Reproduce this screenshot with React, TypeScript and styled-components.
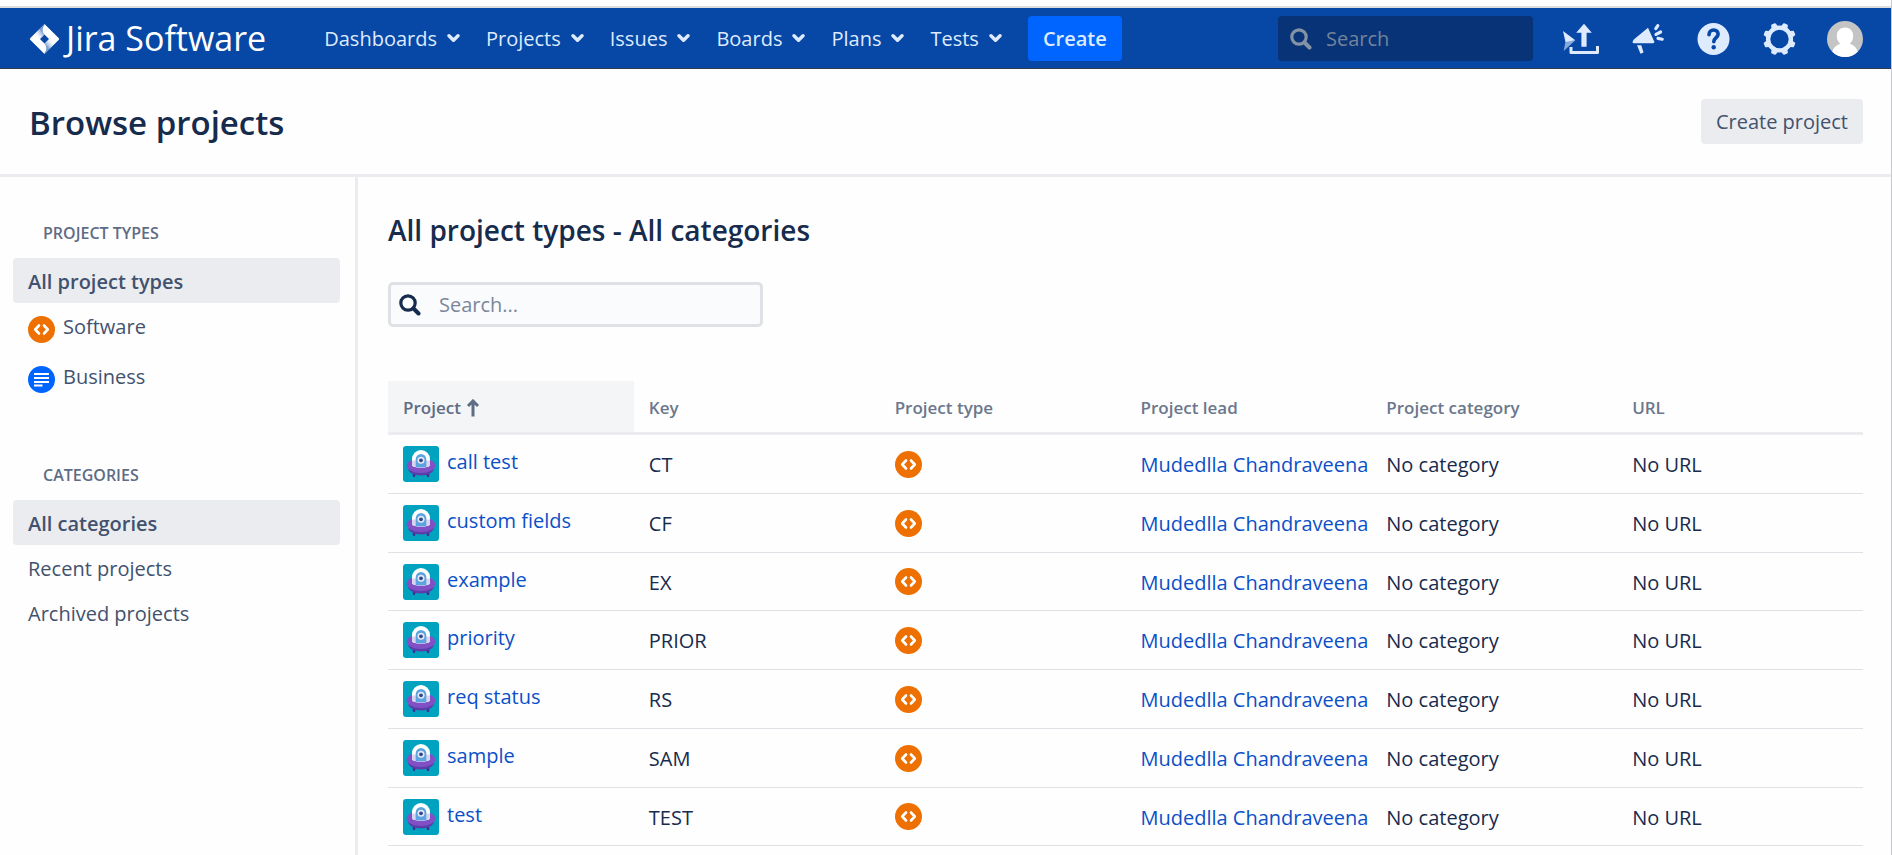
import React from 'react';
import styled, { createGlobalStyle } from 'styled-components';

const color = {
  nav: '#0747a6',
  navText: '#deebff',
  primary: '#0065ff',
  link: '#0b50c8',
  heading: '#172b4d',
  text: '#253858',
  muted: '#42526e',
  subtle: '#6b778c',
  line: '#ebecf0',
  rowLine: '#dfe1e6',
};

const GlobalStyle = createGlobalStyle`
  *, *::before, *::after { box-sizing: border-box; }
  body {
    margin: 0;
    background: #fefefe;
    color: ${color.heading};
    font: 400 20px/30px 'Open Sans', 'Noto Sans', sans-serif;
  }
  button, input { font: inherit; }
  a { text-decoration: none; }
`;

const Page = styled.div`
  display: flex;
  flex-direction: column;
  min-height: 100vh;
  padding-top: 6px;
  border-right: 1px solid #c8c8ca;
`;

const TopBar = styled.header`
  display: flex;
  align-items: center;
  padding: 8px 28px 7px 29px;
  border-top: 2px solid #dddddd;
  border-bottom: 1px solid #2e3d54;
  background: ${color.nav};
  background-clip: padding-box;
`;

const Brand = styled.a`
  display: flex;
  align-items: center;
  gap: 6px;
  margin-right: 58px;
  color: #fff;
  font-size: 34px;
  line-height: 45px;
  white-space: nowrap;
`;

const Menu = styled.nav`
  display: flex;
  align-items: center;
  gap: 26px;
`;

const MenuButton = styled.button`
  display: flex;
  align-items: center;
  gap: 10px;
  padding: 0;
  border: 0;
  background: none;
  color: ${color.navText};
`;

const CreateButton = styled.button`
  height: 45px;
  padding: 0 15px;
  border: 0;
  border-radius: 4px;
  background: ${color.primary};
  color: ${color.navText};
  font-weight: 600;
`;

const QuickSearch = styled.label`
  display: flex;
  align-items: center;
  gap: 14px;
  width: 255px;
  height: 45px;
  margin-left: auto;
  padding: 0 12px;
  border-radius: 4px;
  background: #083376;
  color: #8492a6;
`;

const QuickInput = styled.input`
  flex: 1;
  min-width: 0;
  padding: 0;
  border: 0;
  outline: 0;
  background: none;
  color: #fff;
  &::placeholder { color: #73839c; opacity: 1; }
`;

const Tools = styled.div`
  display: flex;
  gap: 30px;
  margin-left: 30px;
`;

const ToolButton = styled.button`
  display: block;
  width: 36px;
  height: 36px;
  padding: 0;
  border: 0;
  background: none;
  color: ${color.navText};
  svg { display: block; }
`;

const PageHeader = styled.div`
  display: flex;
  align-items: center;
  justify-content: space-between;
  padding: 30px 28px 30px 29px;
  border-bottom: 3px solid ${color.line};
`;

const Title = styled.h1`
  margin: 0;
  padding-top: 3px;
  font-size: 33px;
  font-weight: 600;
  line-height: 42px;
`;

const PlainButton = styled.button`
  height: 45px;
  padding: 0 15px;
  border: 0;
  border-radius: 4px;
  background: ${color.line};
  color: ${color.muted};
`;

const Body = styled.div`
  display: flex;
  flex: 1;
`;

const Sidebar = styled.aside`
  flex: none;
  width: 358px;
  padding: 0 15px 0 13px;
  border-right: 3px solid ${color.line};
`;

const Group = styled.section`
  padding-top: 44px;
  margin-bottom: 16px;
`;

const GroupTitle = styled.h2`
  margin: 0 30px 13px;
  color: #5e6c84;
  font-size: 16px;
  font-weight: 600;
  line-height: 24px;
`;

const SideLink = styled.a<{ $active?: boolean }>`
  display: block;
  height: 45px;
  padding: 1px 15px 0;
  border-radius: 4px;
  background: ${(p) => (p.$active ? color.line : 'transparent')};
  color: ${color.muted};
  font-weight: ${(p) => (p.$active ? 600 : 400)};
  line-height: 45px;
`;

const TypeLink = styled.a`
  display: flex;
  gap: 8px;
  height: 50px;
  padding: 13px 15px 0;
  color: ${color.muted};
  line-height: 22px;
`;

const Main = styled.main`
  flex: 1;
  min-width: 0;
  padding: 35px 28px 0 30px;
`;

const Subtitle = styled.h2`
  margin: 0 0 34px;
  font-size: 28px;
  font-weight: 600;
  line-height: 36px;
`;

const Filter = styled.label`
  display: flex;
  align-items: center;
  gap: 18px;
  width: 375px;
  height: 45px;
  margin-bottom: 54px;
  padding: 0 8px;
  border: 3px solid ${color.rowLine};
  border-radius: 5px;
  background: #fafbfc;
  color: ${color.heading};
`;

const FilterInput = styled.input`
  flex: 1;
  min-width: 0;
  padding: 0;
  border: 0;
  outline: 0;
  background: none;
  &::placeholder { color: #7a869a; opacity: 1; }
`;

const Table = styled.table`
  width: 100%;
  table-layout: fixed;
  border-collapse: separate;
  border-spacing: 0;
`;

const HeadCell = styled.th<{ $sorted?: boolean }>`
  height: 54px;
  padding: 2px 0 0 15px;
  border-bottom: 3px solid ${color.line};
  background: ${(p) => (p.$sorted ? '#f4f5f7' : 'transparent')};
  color: ${(p) => (p.$sorted ? '#5e6c84' : color.subtle)};
  font-size: 17px;
  font-weight: 600;
  line-height: 24px;
  text-align: left;
`;

const SortLabel = styled.span`
  display: flex;
  align-items: center;
  gap: 5px;
`;

const Row = styled.tr`
  height: 59px;
  &:nth-child(4n + 3) { height: 58px; }
`;

const Cell = styled.td`
  padding: 0 0 0 15px;
  border-bottom: 1px solid ${color.rowLine};
  white-space: nowrap;
  svg { display: block; }
`;

const TextCell = styled(Cell)`
  padding-top: 2px;
`;

const TextLink = styled.a`
  color: ${color.link};
`;

const ProjectLink = styled.a`
  display: flex;
  gap: 8px;
  color: ${color.link};
  line-height: 32px;
`;

const JiraMark = () => (
  <svg width="31" height="32" viewBox="0 0 31 32" aria-hidden="true">
    <defs>
      <linearGradient id="facetTop" x1="15" y1="10" x2="8" y2="16" gradientUnits="userSpaceOnUse">
        <stop offset="0" stopColor="#0747a6" stopOpacity=".55" />
        <stop offset="1" stopColor="#fff" stopOpacity="0" />
      </linearGradient>
      <linearGradient id="facetBottom" x1="16" y1="22" x2="23" y2="16" gradientUnits="userSpaceOnUse">
        <stop offset="0" stopColor="#0747a6" stopOpacity=".55" />
        <stop offset="1" stopColor="#fff" stopOpacity="0" />
      </linearGradient>
    </defs>
    <path
      fill="#fff"
      fillRule="evenodd"
      d="M15.500 1 29.600 14.900a1.500 1.500 0 0 1 0 2.200L15.500 31 1.400 17.100a1.500 1.500 0 0 1 0-2.200zM15.500 11.600 11 16l4.500 4.400L20 16z"
    />
    <path fill="url(#facetTop)" d="M15.500 1v1c-2.500 3-2.300 7 0 9.600L8.500 18.500 5 11.500z" />
    <path fill="url(#facetBottom)" d="M15.500 31v-1c2.500-3 2.300-7 0-9.600l7-6.900 3.500 7z" />
  </svg>
);

const Chevron = () => (
  <svg width="13" height="9" viewBox="0 0 13 9" aria-hidden="true">
    <path d="M2 1.800 6.500 6.300 11 1.800" fill="none" stroke="currentColor" strokeWidth="3.400" strokeLinecap="round" strokeLinejoin="round" />
  </svg>
);

const SearchIcon = () => (
  <svg width="22" height="22" viewBox="0 0 22 22" aria-hidden="true">
    <circle cx="9" cy="9" r="7.200" fill="none" stroke="currentColor" strokeWidth="3.200" />
    <path d="m14.500 14.500 5 5" stroke="currentColor" strokeWidth="4" strokeLinecap="round" />
  </svg>
);

const UploadIcon = () => (
  <svg width="36" height="36" viewBox="0 0 36 36" aria-hidden="true">
    <path fill="currentColor" d="m0 10 12.300 9.300L2.500 21z" />
    <path fill="currentColor" opacity=".6" d="M12.300 19.300.7 30l1.800-9.400z" />
    <path fill="currentColor" d="M21 2.800 28.800 11.800H23.600v14h-5.200v-14h-5.200z" />
    <path fill="none" stroke="currentColor" strokeWidth="3" strokeLinejoin="round" d="M8 26v5.500h26.500V25" />
  </svg>
);

const MegaphoneIcon = () => (
  <svg width="36" height="36" viewBox="0 0 36 36" aria-hidden="true">
    <path fill="currentColor" d="M19 6.800 25.200 20.500q.6 1.800-1.200 1.800H4.600q-1.300-.2-1-1.500.4-1.600 1.800-2.800z" />
    <path fill="currentColor" d="M8 24.300h4.300l2.200 7.200-3 1.200z" />
    <g stroke="currentColor" strokeWidth="3.200" strokeLinecap="round">
      <path d="m28.800 4.600-2 3" />
      <path d="m31.600 11-4.600 2.400" />
      <path d="m33.200 18.200-4.200-.8" />
    </g>
  </svg>
);

const HelpIcon = () => (
  <svg width="36" height="36" viewBox="0 0 36 36" aria-hidden="true">
    <circle cx="18.500" cy="18" r="16" fill="currentColor" />
    <path d="M14 13.800c0-3 2-4.800 4.600-4.800s4.500 1.700 4.500 4.300c0 3.200-4.300 3.600-4.300 7.400" fill="none" stroke={color.nav} strokeWidth="3.600" strokeLinecap="round" />
    <circle cx="18.700" cy="26.200" r="2.200" fill={color.nav} />
  </svg>
);

const GearIcon = () => (
  <svg width="36" height="36" viewBox="0 0 36 36" aria-hidden="true">
    <circle cx="18.500" cy="18" r="11.400" fill="none" stroke="currentColor" strokeWidth="4.400" />
    {[22.5, 67.5, 112.5, 157.5, 202.5, 247.5, 292.5, 337.5].map((angle) => (
      <path key={angle} fill="currentColor" transform={`rotate(${angle} 18.500 18)`} d="M14.900 6.500l1-4q.2-.8 1-.8h3.200q.8 0 1 .8l1 4z" />
    ))}
  </svg>
);

const UserIcon = () => (
  <svg width="36" height="36" viewBox="0 0 36 36" aria-hidden="true">
    <clipPath id="userClip"><circle cx="18" cy="18" r="18" /></clipPath>
    <g clipPath="url(#userClip)">
      <rect width="36" height="36" fill="#c4c4c4" />
      <path fill="#fff" d="M18 6.500c5 0 8.200 3.500 8.200 8.500 0 3.300-1.400 6.200-3.400 7.800 3.800 1.200 7 4 8 8.200V36H5.200v-5c1-4.200 4.200-7 8-8.200-2-1.600-3.400-4.500-3.400-7.800 0-5 3.200-8.500 8.200-8.500z" />
    </g>
  </svg>
);

const SoftwareIcon = ({ label }: { label?: string }) => (
  <svg width="27" height="27" viewBox="0 0 27 27" role={label ? 'img' : undefined} aria-label={label} aria-hidden={label ? undefined : true}>
    <circle cx="13.500" cy="13.500" r="13.500" fill="#ed7000" />
    <path d="M11 9.500 7.200 13.500l3.800 4M16 9.500l3.800 4-3.800 4" fill="none" stroke="#fff" strokeWidth="2.600" strokeLinecap="round" strokeLinejoin="round" />
  </svg>
);

const BusinessIcon = () => (
  <svg width="27" height="27" viewBox="0 0 27 27" aria-hidden="true">
    <circle cx="13.500" cy="13.500" r="13.500" fill="#0065ff" />
    <path d="M6 8h15M6 12h15M6 16h15M6 19.500h8.500" stroke="#fff" strokeWidth="2.200" />
  </svg>
);

const SortArrow = () => (
  <svg width="14" height="18" viewBox="0 0 14 18" aria-hidden="true">
    <path d="M7 17.500V2.500M2 7 7 2 12 7" fill="none" stroke="currentColor" strokeWidth="3" />
  </svg>
);

const ProjectAvatar = () => (
  <svg width="36" height="36" viewBox="0 0 36 36" aria-hidden="true">
    <rect width="36" height="36" rx="3" fill="#00a3bf" />
    <path fill="#403294" d="M9.500 25h17l-.4 6h-2l-.8-2.500H12.700l-.8 2.500h-2z" />
    <ellipse cx="18" cy="22" rx="13" ry="7.500" fill="#5a3fac" />
    <ellipse cx="18" cy="19.500" rx="14.300" ry="7.500" fill="#8050c4" />
    <path fill="#fff" d="M9 13a9 9 0 0 1 18 0v6.500q-1.500 2-9 2t-9-2z" />
    <path fill="#d9d5ee" d="M9 14.500h18v5q-1.500 2-9 2t-9-2z" />
    <path fill="#5ba4e0" d="M12.700 13.300a5.300 5.300 0 0 1 10.600 0v8H12.700z" />
    <circle cx="18" cy="14.300" r="3.500" fill="#e6e8f5" />
    <circle cx="18" cy="14.300" r="1.900" fill="#35478c" />
  </svg>
);

const menus = ['Dashboards', 'Projects', 'Issues', 'Boards', 'Plans', 'Tests'];

const tools = [
  { name: 'Upload', Icon: UploadIcon },
  { name: 'Announcements', Icon: MegaphoneIcon },
  { name: 'Help', Icon: HelpIcon },
  { name: 'Settings', Icon: GearIcon },
  { name: 'Profile', Icon: UserIcon },
];

const columns = ['Key', 'Project type', 'Project lead', 'Project category', 'URL'];

const projects = [
  { name: 'call test', key: 'CT' },
  { name: 'custom fields', key: 'CF' },
  { name: 'example', key: 'EX' },
  { name: 'priority', key: 'PRIOR' },
  { name: 'req status', key: 'RS' },
  { name: 'sample', key: 'SAM' },
  { name: 'test', key: 'TEST' },
];

export default function App() {
  return (
    <Page>
      <GlobalStyle />
      <TopBar>
        <Brand href="#">
          <JiraMark />
          Jira Software
        </Brand>
        <Menu>
          {menus.map((name) => (
            <MenuButton key={name} type="button">
              {name}
              <Chevron />
            </MenuButton>
          ))}
          <CreateButton type="button">Create</CreateButton>
        </Menu>
        <QuickSearch>
          <SearchIcon />
          <QuickInput type="text" placeholder="Search" aria-label="Search" />
        </QuickSearch>
        <Tools>
          {tools.map(({ name, Icon }) => (
            <ToolButton key={name} type="button" aria-label={name}>
              <Icon />
            </ToolButton>
          ))}
        </Tools>
      </TopBar>

      <PageHeader>
        <Title>Browse projects</Title>
        <PlainButton type="button">Create project</PlainButton>
      </PageHeader>

      <Body>
        <Sidebar>
          <Group>
            <GroupTitle>PROJECT TYPES</GroupTitle>
            <SideLink href="#" $active>All project types</SideLink>
            <TypeLink href="#"><SoftwareIcon />Software</TypeLink>
            <TypeLink href="#"><BusinessIcon />Business</TypeLink>
          </Group>
          <Group>
            <GroupTitle>CATEGORIES</GroupTitle>
            <SideLink href="#" $active>All categories</SideLink>
            <SideLink href="#">Recent projects</SideLink>
            <SideLink href="#">Archived projects</SideLink>
          </Group>
        </Sidebar>

        <Main>
          <Subtitle>All project types - All categories</Subtitle>
          <Filter>
            <SearchIcon />
            <FilterInput type="text" placeholder="Search..." aria-label="Search projects" />
          </Filter>
          <Table>
            <thead>
              <tr>
                <HeadCell $sorted aria-sort="ascending">
                  <SortLabel>Project<SortArrow /></SortLabel>
                </HeadCell>
                {columns.map((name) => (
                  <HeadCell key={name}>{name}</HeadCell>
                ))}
              </tr>
            </thead>
            <tbody>
              {projects.map((project) => (
                <Row key={project.key}>
                  <Cell>
                    <ProjectLink href="#"><ProjectAvatar />{project.name}</ProjectLink>
                  </Cell>
                  <TextCell>{project.key}</TextCell>
                  <Cell><SoftwareIcon label="Software" /></Cell>
                  <TextCell><TextLink href="#">Mudedlla Chandraveena</TextLink></TextCell>
                  <TextCell>No category</TextCell>
                  <TextCell>No URL</TextCell>
                </Row>
              ))}
            </tbody>
          </Table>
        </Main>
      </Body>
    </Page>
  );
}
